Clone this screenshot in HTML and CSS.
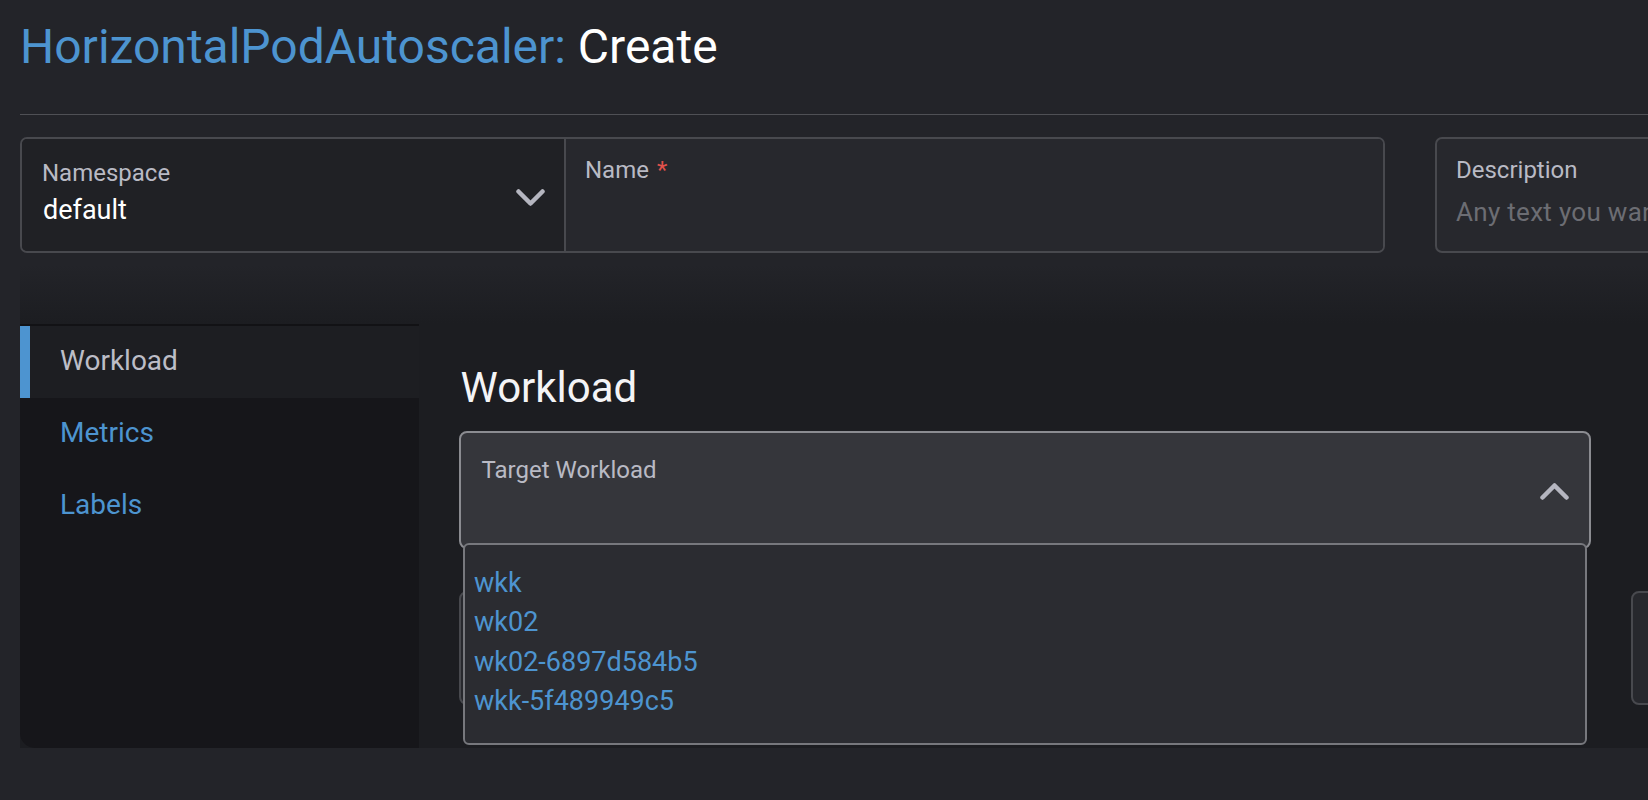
FILE: index.html
```html
<!DOCTYPE html>
<html lang="en">
<head>
<meta charset="utf-8">
<title>HorizontalPodAutoscaler: Create</title>
<link rel="stylesheet" href="styles.css">
</head>
<body>
<div class="page">
  <header class="title-bar">
    <h1 class="title"><span class="title-type">HorizontalPodAutoscaler:</span> <span class="title-mode">Create</span></h1>
  </header>
  <hr class="divider">

  <div class="top-row">
    <div class="ns-name">
      <div class="ns">
        <div class="ns-text">
          <div class="ns-label">Namespace</div>
          <div class="ns-value">default</div>
        </div>
        <svg class="chev chev-down" width="29" height="17" viewBox="0 0 29 17" aria-hidden="true">
          <polyline points="2.5,2.5 14.5,14.5 26.5,2.5" fill="none" stroke="#b5b6c0" stroke-width="4.5" stroke-linecap="round" stroke-linejoin="round"/>
        </svg>
      </div>
      <div class="name">
        <div class="field-label">Name <span class="req">*</span></div>
      </div>
    </div>
    <div class="desc">
      <div class="field-label">Description</div>
      <div class="placeholder">Any text you want that better describes this resource</div>
    </div>
  </div>

  <div class="tabbed">
    <nav class="side-tabs">
      <div class="tab active">Workload</div>
      <div class="tab">Metrics</div>
      <div class="tab">Labels</div>
    </nav>
    <main class="tab-content">
      <h2 class="section-title">Workload</h2>
      <div class="select open">
        <div class="select-label">Target Workload</div>
        <svg class="chev chev-up" width="29" height="17" viewBox="0 0 29 17" aria-hidden="true">
          <polyline points="2.5,14.5 14.5,2.5 26.5,14.5" fill="none" stroke="#b5b6c0" stroke-width="4.5" stroke-linecap="round" stroke-linejoin="round"/>
        </svg>
        <ul class="dropdown">
          <li class="option">wkk</li>
          <li class="option">wk02</li>
          <li class="option">wk02-6897d584b5</li>
          <li class="option">wkk-5f489949c5</li>
        </ul>
      </div>
      <div class="replicas">
        <div class="input-box"></div>
        <div class="input-box"></div>
      </div>
    </main>
  </div>
</div>
</body>
</html>
```

FILE: styles.css
```css
html, body {
  margin: 0;
  padding: 0;
}
body {
  width: 1648px;
  height: 800px;
  overflow: hidden;
  background: #232429;
  font-family: Roboto, "Liberation Sans", sans-serif;
  color: #b9bac4;
}
.page {
  padding-left: 20px;
  overflow: hidden;
  height: 800px;
  box-sizing: border-box;
}

/* title */
.title {
  margin: 0;
  padding-top: 19px;
  font-size: 48px;
  line-height: 56px;
  font-weight: 400;
  white-space: nowrap;
}
.title-type { color: #4d94d0; }
.title-mode { color: #ffffff; }

.divider {
  margin: 39px 0 0 0;
  border: 0;
  height: 1px;
  background: #4f5055;
}

/* top row */
.top-row {
  margin-top: 22px;
  display: flex;
  gap: 50px;
  height: 116px;
}
.ns-name {
  flex: 0 0 1365px;
  display: flex;
  box-sizing: border-box;
  height: 116px;
  border: 2px solid #48494e;
  border-radius: 7px;
  overflow: hidden;
}
.ns {
  flex: 0 0 542px;
  display: flex;
  align-items: flex-start;
  background: #202125;
  border-right: 2px solid #48494e;
}
.ns-text {
  flex: 1;
  padding: 20px 0 0 20px;
}
.ns-label {
  font-size: 24px;
  line-height: 28px;
  color: #b9bac4;
}
.ns-value {
  margin-top: 7px;
  padding-left: 1px;
  font-size: 27px;
  line-height: 32px;
  color: #ffffff;
}
.chev-down {
  margin: 50px 19px 0 0;
  flex: 0 0 auto;
}
.name {
  flex: 1;
  background: #27282d;
  padding: 17px 19px;
}
.field-label {
  font-size: 24px;
  line-height: 28px;
  color: #b9bac4;
  white-space: nowrap;
}
.req {
  color: #e2514b;
  margin-left: 2px;
}
.desc {
  flex: 0 0 1300px;
  box-sizing: border-box;
  height: 116px;
  border: 2px solid #48494e;
  border-radius: 7px;
  background: #27282d;
  padding: 17px 19px;
}
.placeholder {
  margin-top: 12px;
  font-size: 26px;
  line-height: 32px;
  letter-spacing: 0.3px;
  color: #6c6d73;
  white-space: nowrap;
}

/* tabbed area */
.tabbed {
  margin-top: 12px;
  height: 483px;
  box-sizing: border-box;
  padding-top: 59px;
  display: grid;
  grid-template-columns: 399px 1fr;
  background: linear-gradient(to bottom, #232429 0px, #1c1d21 59px, #1c1d21 100%);
}
.side-tabs {
  background: #16161a;
  border-top: 2px solid #121215;
  border-bottom-left-radius: 15px;
}
.tab {
  height: 72px;
  box-sizing: border-box;
  padding-left: 40px;
  font-size: 28px;
  line-height: 69px;
  color: #4d94d0;
}
.tab.active {
  background: #1d1e22;
  color: #bcbdc7;
  box-shadow: inset 10px 0 0 #4d94d0;
}

.tab-content {
  padding: 38.6px 0 0 40px;
  overflow: hidden;
  min-width: 0;
}
.section-title {
  margin: 0 0 18.4px 1.5px;
  font-size: 42px;
  line-height: 50px;
  font-weight: 400;
  color: #f4f4f6;
}

.select {
  position: relative;
  width: 1132px;
  height: 118px;
  box-sizing: border-box;
  border: 2px solid #8b8c91;
  border-radius: 8px;
  background: #35363b;
  display: flex;
  align-items: flex-start;
}
.select-label {
  flex: 1;
  padding: 22.8px 0 0 20.5px;
  font-size: 24px;
  line-height: 28px;
  color: #b9bac4;
}
.chev-up {
  margin: 50px 20px 0 0;
  flex: 0 0 auto;
}
.dropdown {
  position: absolute;
  top: 110px;
  left: 2px;
  z-index: 2;
  width: 1124px;
  height: 202px;
  box-sizing: border-box;
  margin: 0;
  padding: 19px 9px;
  list-style: none;
  border: 2px solid #77787d;
  border-radius: 6px;
  background: #2b2c31;
}
.option {
  font-size: 27px;
  line-height: 39.3px;
  color: #4d94d0;
}

.replicas {
  margin-top: 42px;
  display: grid;
  grid-template-columns: 1120px 1132px;
  gap: 52px;
}
.input-box {
  height: 114px;
  box-sizing: border-box;
  border: 2px solid #48494e;
  border-radius: 8px;
  background: #27282d;
}
```
